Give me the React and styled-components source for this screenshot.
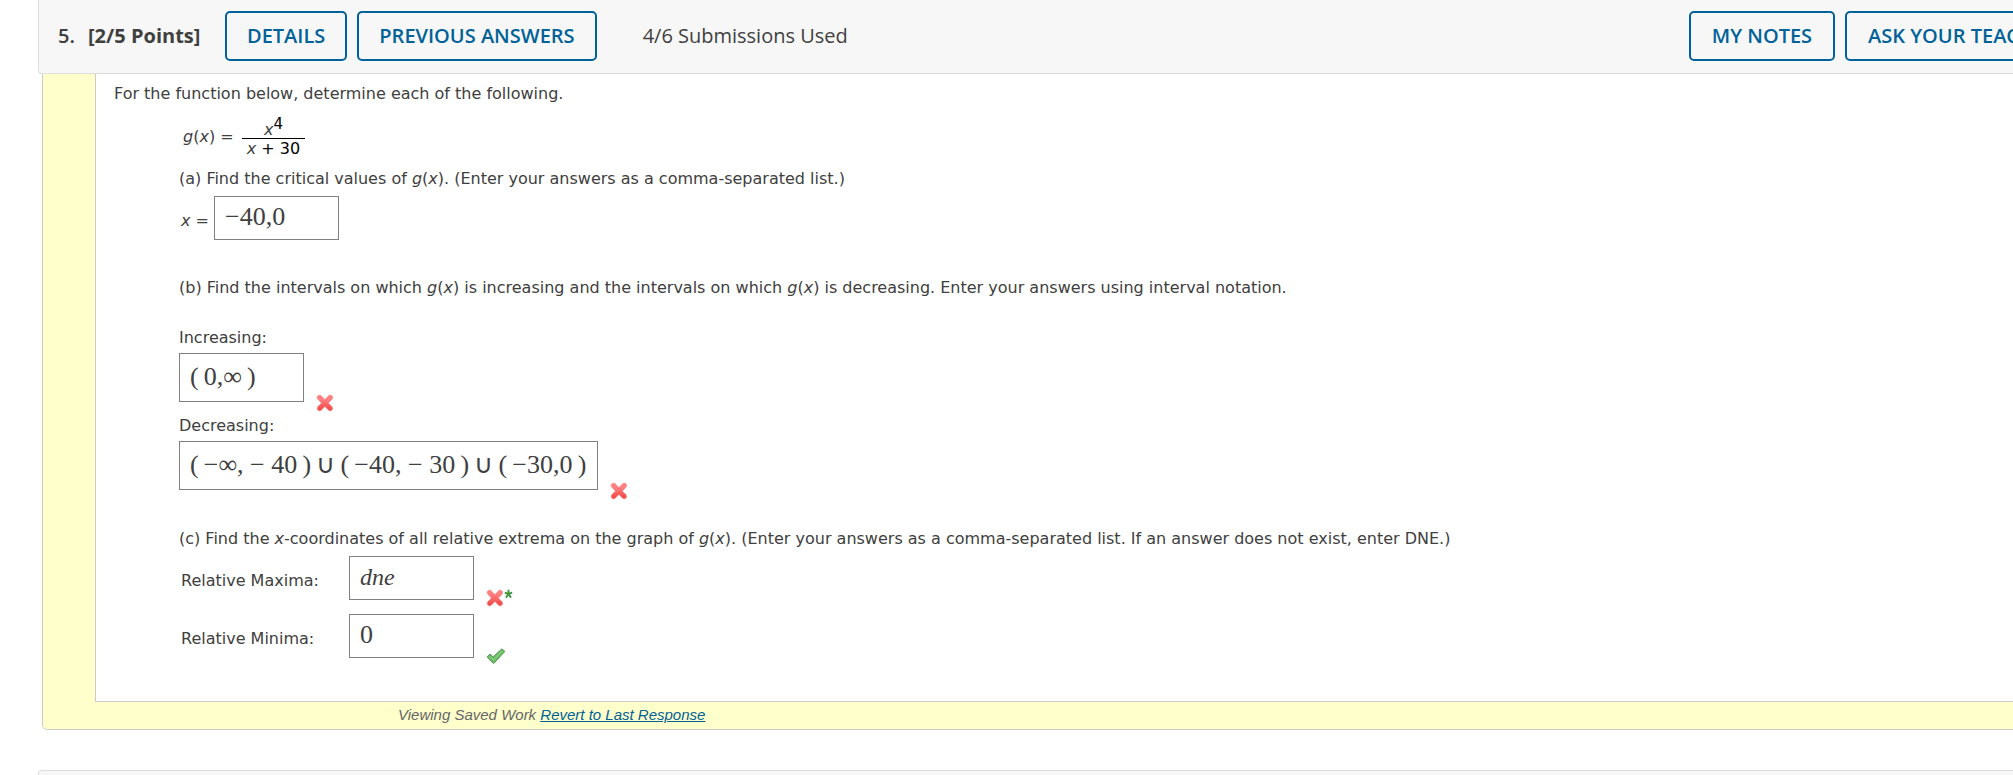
import React from 'react';
import styled, { createGlobalStyle } from 'styled-components';

const GlobalStyle = createGlobalStyle`
  * {
    box-sizing: border-box;
  }

  body {
    margin: 0;
    background: #fff;
    color: #404040;
    font-family: Verdana, "DejaVu Sans", sans-serif;
    font-size: 16px;
    line-height: 24px;
  }
`;

const Page = styled.main`
  overflow: hidden;
  padding-left: 38px;
`;

const QuestionHeader = styled.header`
  display: flex;
  align-items: center;
  width: calc(100% + 90px);
  height: 74px;
  padding: 0 11px 1px 19px;
  background: #f7f7f7;
  border: 1px solid #ddd;
  border-top: none;
  border-radius: 0 0 4px 4px;
  font-family: "Open Sans", sans-serif;
  font-size: 20px;
`;

const NextHeader = styled.div`
  width: calc(100% + 90px);
  height: 5px;
  margin-top: 40px;
  background: #f7f7f7;
  border: 1px solid #ddd;
  border-bottom: none;
  border-radius: 4px 4px 0 0;
`;

const Number = styled.strong`
  width: 30px;
  font-weight: 600;
`;

const Points = styled.strong`
  width: 137px;
  font-weight: 700;
`;

const HeaderButton = styled.button`
  height: 50px;
  margin-right: 10px;
  padding: 0 ${(props) => (props.$wide ? 21 : 20)}px 2px;
  background: #f7f7f7;
  border: 2px solid #006298;
  border-radius: 5px;
  color: #006298;
  font: 600 20px "Open Sans", sans-serif;
  white-space: nowrap;
  cursor: pointer;
`;

const Submissions = styled.span`
  margin-left: 36px;
`;

const Actions = styled.div`
  display: flex;
  margin-left: auto;
`;

const Panel = styled.section`
  width: calc(100% + 90px);
  margin-left: 4px;
  padding-left: 52px;
  background: #ffffcc;
  border: 1px solid #ccc;
  border-top: none;
  border-radius: 0 0 5px 5px;
`;

const Content = styled.div`
  padding: 8px 18px 34px;
  background: #fff;
  border-left: 1px solid #ccc;
  border-bottom: 1px solid #ccc;
`;

const Text = styled.p`
  margin: 0 0 ${(props) => props.$space || 0}px;
`;

const Parts = styled.div`
  padding-left: 65px;
`;

const Formula = styled.div`
  display: flex;
  align-items: center;
  gap: 8px;
  height: 61px;
  padding-left: 4px;
`;

const Fraction = styled.span`
  display: flex;
  flex-direction: column;
  align-items: center;
  padding-top: 7px;
  color: #000;
  line-height: 20px;

  i {
    color: #404040;
  }
`;

const Numerator = styled.span`
  width: 100%;
  border-bottom: 1px solid #000;
  line-height: 16px;
  text-align: center;

  sup {
    font-size: 15px;
    line-height: 0;
    vertical-align: 6px;
  }
`;

const Part = styled.section`
  padding-bottom: ${(props) => props.$space || 0}px;
`;

const Field = styled.div`
  display: flex;
  align-items: center;
  padding: 5px 0 0 2px;
`;

const VariableLabel = styled.label`
  width: 33px;
  padding-top: 6px;
`;

const ExtremaLabel = styled.label`
  width: 168px;
  padding-top: 6px;
`;

const IntervalLabel = styled.label`
  display: block;
`;

const Answer = styled.input`
  width: ${(props) => props.$width || 125}px;
  height: ${(props) => (props.$tall ? 49 : 44)}px;
  padding: 0 10px 2px;
  background: #fff;
  border: 1px solid #808080;
  border-radius: 0;
  color: #404040;
  font-family: "Liberation Serif", "Times New Roman", "DejaVu Sans Light", serif;
  font-size: ${(props) => (props.$word ? 24 : 26)}px;
  font-style: ${(props) => (props.$word ? 'italic' : 'normal')};
`;

const IntervalRow = styled.div`
  display: flex;
  align-items: flex-end;
  gap: 12px;
  padding-top: 3px;
`;

const ExtremaRow = styled.div`
  display: flex;
  align-items: center;
  height: 58px;
  padding: 5px 0 9px 2px;
`;

const Mark = styled.span`
  display: flex;
  align-self: flex-end;
  height: ${(props) => (props.$inset ? 11 : 8)}px;
  margin-left: ${(props) => (props.$inset ? 12 : 0)}px;

  svg {
    flex: none;
    overflow: visible;
  }
`;

const SavedWork = styled.div`
  height: 27px;
  padding: 1px 0 0 303px;
  color: #666;
  font: italic 15px/24px Arial, "Liberation Sans", sans-serif;

  a {
    color: #006298;
  }
`;

const Cross = () => (
  <svg width="18" height="18" viewBox="0 0 18 18" role="img" aria-label="Incorrect">
    <defs>
      <linearGradient id="crossFill" x1="0" y1="0" x2="0" y2="18" gradientUnits="userSpaceOnUse">
        <stop offset="0.3" stopColor="#ff8080" />
        <stop offset="1" stopColor="#ee3c3c" />
      </linearGradient>
    </defs>
    <path d="M3.6 3.6 14.2 14.4M14.2 3.6 3.6 14.4" stroke="#f6a0a0" strokeWidth="5.6" strokeLinecap="round" />
    <path d="M3.8 3.8 14 14.2M14 3.8 3.8 14.2" stroke="url(#crossFill)" strokeWidth="4.6" strokeLinecap="round" />
  </svg>
);

const Star = () => (
  <svg width="9" height="10" viewBox="0 0 9 10" aria-hidden="true">
    <path d="M4.5 5V.8M4.5 5 .8 3.6M4.5 5 8.2 3.6M4.5 5 2 8.6M4.5 5 7 8.6" stroke="#3f963f" strokeWidth="1.9" />
  </svg>
);

const Check = () => (
  <svg width="20" height="18" viewBox="0 0 20 18" role="img" aria-label="Correct">
    <path d="M1.2 9.9 4 7.1 7.2 9.9 15.8 1.9 18.8 4.4 7.6 16.6Z" fill="#6fbd68" stroke="#489645" strokeLinejoin="round" />
    <path d="M3 9.5 7.4 12.9 16.6 4" fill="none" stroke="#85cb7c" strokeWidth="1.4" />
  </svg>
);

const Gx = () => (
  <>
    <i>g</i>(<i>x</i>)
  </>
);

const intervals = [
  { id: 'increasing', label: 'Increasing:', value: '(\u20090,∞\u2009)' },
  {
    id: 'decreasing',
    label: 'Decreasing:',
    value: '(\u2009−∞, − 40\u2009)\u2009∪\u2009(\u2009−40, − 30\u2009)\u2009∪\u2009(\u2009−30,0\u2009)',
    width: 419,
  },
];

const App = () => (
  <Page>
    <GlobalStyle />
    <QuestionHeader>
      <Number>5.</Number>
      <Points>[2/5 Points]</Points>
      <HeaderButton>DETAILS</HeaderButton>
      <HeaderButton>PREVIOUS ANSWERS</HeaderButton>
      <Submissions>4/6 Submissions Used</Submissions>
      <Actions>
        <HeaderButton $wide>MY NOTES</HeaderButton>
        <HeaderButton $wide>ASK YOUR TEACHER</HeaderButton>
      </Actions>
    </QuestionHeader>
    <Panel>
      <Content>
        <Text>For the function below, determine each of the following.</Text>
        <Parts>
          <Formula>
            <span><Gx /> =</span>
            <Fraction>
              <Numerator><i>x</i><sup>4</sup></Numerator>
              <span>&nbsp;<i>x</i> + 30&nbsp;</span>
            </Fraction>
          </Formula>
          <Part $space={36}>
            <Text>(a) Find the critical values of <Gx />. (Enter your answers as a comma-separated list.)</Text>
            <Field>
              <VariableLabel htmlFor="critical"><i>x</i> =</VariableLabel>
              <Answer id="critical" defaultValue="−40,0" />
            </Field>
          </Part>
          <Part $space={25}>
            <Text $space={26}>
              (b) Find the intervals on which <Gx /> is increasing and the intervals on which <Gx /> is decreasing.
              Enter your answers using interval notation.
            </Text>
            {intervals.map((item) => (
              <Part key={item.id} $space={12}>
                <IntervalLabel htmlFor={item.id}>{item.label}</IntervalLabel>
                <IntervalRow>
                  <Answer id={item.id} defaultValue={item.value} $width={item.width} $tall />
                  <Mark><Cross /></Mark>
                </IntervalRow>
              </Part>
            ))}
          </Part>
          <Part>
            <Text>
              (c) Find the <i>x</i>-coordinates of all relative extrema on the graph of <Gx />. (Enter your answers as a
              comma-separated list. If an answer does not exist, enter DNE.)
            </Text>
            <ExtremaRow>
              <ExtremaLabel htmlFor="maxima">Relative Maxima:</ExtremaLabel>
              <Answer id="maxima" defaultValue="dne" $word />
              <Mark $inset><Cross /><Star /></Mark>
            </ExtremaRow>
            <ExtremaRow>
              <ExtremaLabel htmlFor="minima">Relative Minima:</ExtremaLabel>
              <Answer id="minima" defaultValue="0" />
              <Mark $inset><Check /></Mark>
            </ExtremaRow>
          </Part>
        </Parts>
      </Content>
      <SavedWork>
        Viewing Saved Work <a href="#revert">Revert to Last Response</a>
      </SavedWork>
    </Panel>
    <NextHeader />
  </Page>
);

export default App;
